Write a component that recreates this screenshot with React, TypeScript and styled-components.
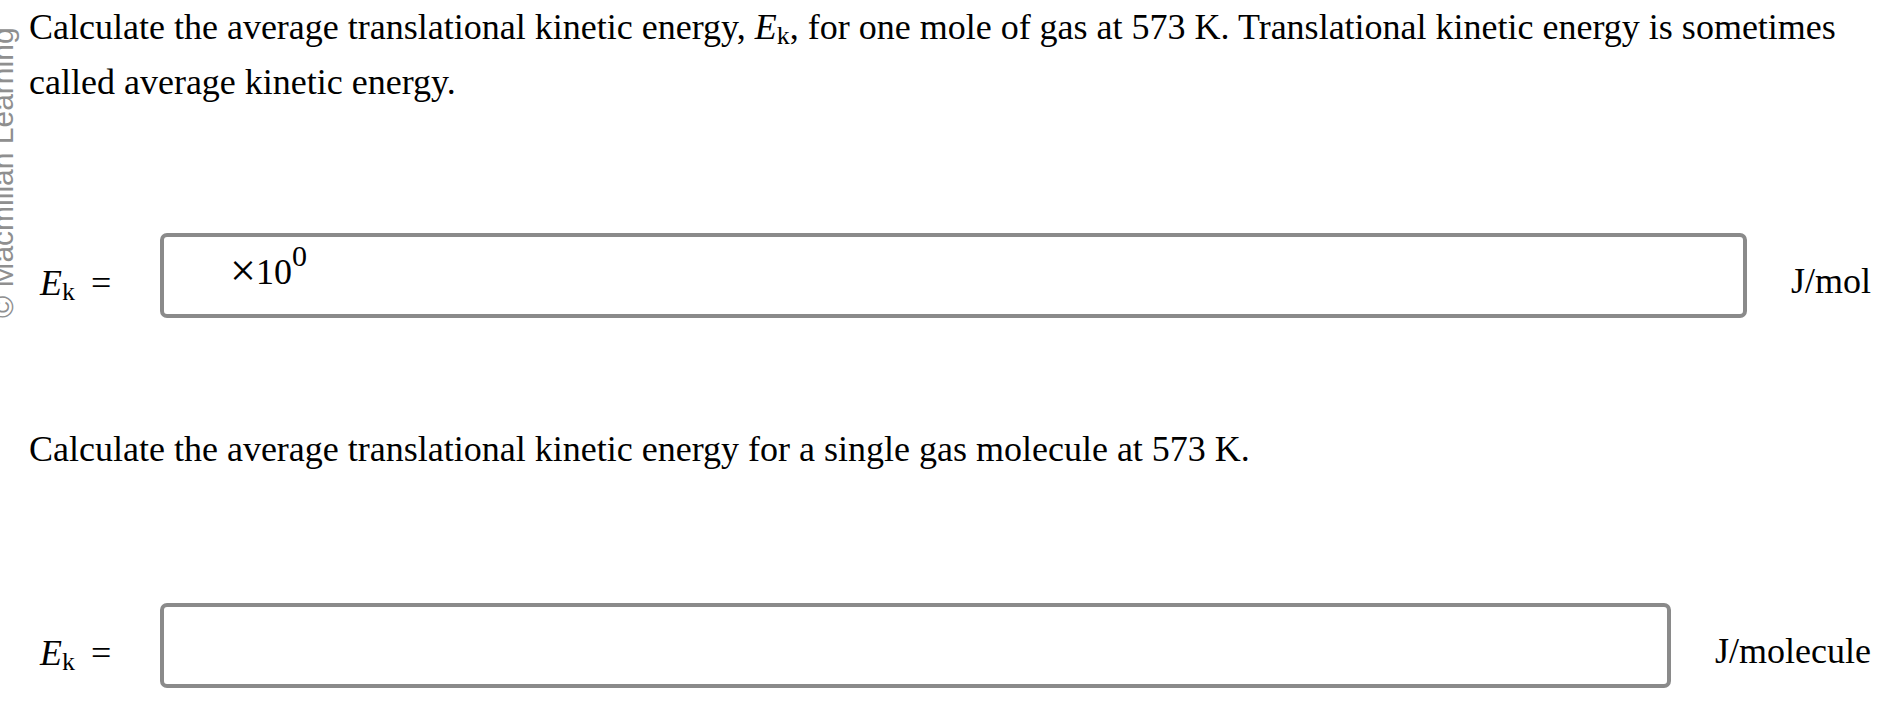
import React from 'react';
import styled, { createGlobalStyle } from 'styled-components';

const GlobalStyle = createGlobalStyle`
  html, body {
    margin: 0;
    padding: 0;
    background: #ffffff;
  }
  body {
    font-family: "Liberation Serif", "Times New Roman", serif;
    color: #000000;
  }
`;

const Page = styled.div`
  position: relative;
  width: 1884px;
  height: 718px;
  overflow: hidden;
  background: #ffffff;
`;

const Watermark = styled.span`
  position: absolute;
  left: -12px;
  top: 318px;
  transform-origin: top left;
  transform: rotate(-90deg);
  font-family: "Liberation Sans", Arial, sans-serif;
  font-size: 30px;
  line-height: 30px;
  color: #8f8f8f;
  white-space: nowrap;
  pointer-events: none;
`;

const Question = styled.p<{ $top: number }>`
  margin: ${p => p.$top}px 0 0 0;
  padding: 0 40px 0 29px;
  font-size: 36px;
  line-height: 55px;
`;

const Row = styled.div<{ $top: number }>`
  display: flex;
  align-items: flex-start;
  margin-top: ${p => p.$top}px;
  padding: 0 13px 0 40px;
`;

const Label = styled.div`
  width: 120px;
  flex: none;
  padding-top: 30px;
  font-size: 36px;
  line-height: 40px;
  white-space: nowrap;
`;

const Var = styled.i`
  font-style: italic;
`;

const Sub = styled.span`
  font-size: 26px;
  line-height: 0;
  vertical-align: -5px;
`;

const Equals = styled.span`
  margin-left: 16px;
`;

const AnswerBox = styled.div`
  flex: 1;
  height: 85px;
  box-sizing: border-box;
  border: 4px solid #8a8a8a;
  border-radius: 7px;
  padding: 15px 0 0 66px;
  font-size: 36px;
  line-height: 40px;
  white-space: nowrap;
`;

const Times = styled.span`
  font-size: 46px;
  line-height: 0;
  vertical-align: -2px;
`;

const Sup = styled.span`
  font-size: 30px;
  line-height: 0;
  vertical-align: 18px;
`;

const Unit = styled.div`
  flex: none;
  margin-left: 44px;
  padding-top: 28px;
  font-size: 36px;
  line-height: 40px;
  white-space: nowrap;
`;

const Ek = () => (
  <>
    <Var>E</Var>
    <Sub>k</Sub>
  </>
);

export default function App() {
  return (
    <Page>
      <GlobalStyle />
      <Watermark>© Macmillan Learning</Watermark>

      <Question $top={0}>
        Calculate the average translational kinetic energy, <Ek />, for one mole of gas at 573 K.
        Translational kinetic energy is sometimes called average kinetic energy.
      </Question>

      <Row $top={123}>
        <Label>
          <Ek />
          <Equals>=</Equals>
        </Label>
        <AnswerBox>
          <Times>×</Times>10<Sup>0</Sup>
        </AnswerBox>
        <Unit>J/mol</Unit>
      </Row>

      <Question $top={104}>
        Calculate the average translational kinetic energy for a single gas molecule at 573 K.
      </Question>

      <Row $top={126}>
        <Label>
          <Ek />
          <Equals>=</Equals>
        </Label>
        <AnswerBox />
        <Unit>J/molecule</Unit>
      </Row>
    </Page>
  );
}
